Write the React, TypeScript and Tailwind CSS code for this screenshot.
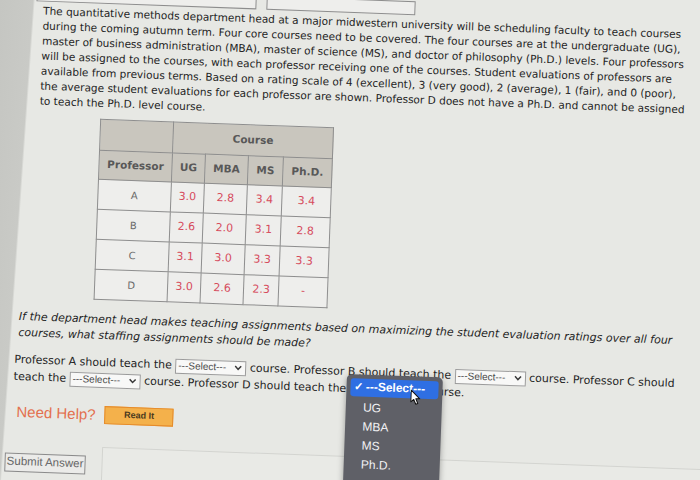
import React from "react";

function Select({ open = false }: { open?: boolean }) {
  return (
    <span className="relative inline-flex align-middle">
      <span className="inline-flex items-center justify-between w-[71px] h-[15px] border border-[#9b9b9b] bg-[#f8f8f7] pl-[2px] pr-[3px] font-['Liberation_Sans',Arial,sans-serif] text-[10px] leading-none text-[#4a4a4a]">
        <span>---Select---</span>
        <svg width="8" height="6" viewBox="0 0 8 6" className="ml-[2px]">
          <path d="M1 1.2 L4 4.4 L7 1.2" fill="none" stroke="#3a3a3a" strokeWidth="1.5" />
        </svg>
      </span>
      {open && (
        <span className="absolute left-[-3px] top-[-8px] z-10 w-[96px] h-[122px] rounded-[5px] bg-[#5f6067] shadow-[0_2px_6px_rgba(0,0,0,0.35)] p-[4px] font-['Liberation_Sans',Arial,sans-serif] text-[12px] text-[#f2f2f4]">
          <span className="flex items-center h-[18px] rounded-[3px] bg-[#2f6fe3] pl-[3px] font-bold text-white">
            <span className="w-[12px] text-[11px]">✓</span>
            <span>---Select---</span>
          </span>
          <span className="flex flex-col pl-[13px] pt-[2px] leading-[19px]">
            <span>UG</span>
            <span>MBA</span>
            <span>MS</span>
            <span>Ph.D.</span>
          </span>
          <svg width="11" height="16" viewBox="0 0 11 16" className="absolute left-[64px] top-[13px]">
            <path d="M0.8 0.8 L0.8 12.5 L3.6 10 L5.8 14.8 L7.8 13.9 L5.7 9.2 L9.6 9.2 Z" fill="#ffffff" stroke="#111" strokeWidth="1" strokeLinejoin="round" />
          </svg>
        </span>
      )}
    </span>
  );
}

const paragraph = [
  "The quantitative methods department head at a major midwestern university will be scheduling faculty to teach courses",
  "during the coming autumn term. Four core courses need to be covered. The four courses are at the undergraduate (UG),",
  "master of business administration (MBA), master of science (MS), and doctor of philosophy (Ph.D.) levels. Four professors",
  "will be assigned to the courses, with each professor receiving one of the courses. Student evaluations of professors are",
  "available from previous terms. Based on a rating scale of 4 (excellent), 3 (very good), 2 (average), 1 (fair), and 0 (poor),",
  "the average student evaluations for each professor are shown. Professor D does not have a Ph.D. and cannot be assigned",
  "to teach the Ph.D. level course.",
];

const rows: [string, string, string, string, string][] = [
  ["A", "3.0", "2.8", "3.4", "3.4"],
  ["B", "2.6", "2.0", "3.1", "2.8"],
  ["C", "3.1", "3.0", "3.3", "3.3"],
  ["D", "3.0", "2.6", "2.3", "-"],
];

export default function App() {
  const th = "border border-[#8e8e8e] font-bold text-[10.5px] text-[#585858]";
  const td = "border border-[#8e8e8e] text-[11px] text-[#d64b5c] bg-[#eeeeec]";
  return (
    <div className="pt-px w-[700px] h-[480px] overflow-hidden bg-[#e7e8e4] bg-[linear-gradient(94deg,#c5c6c2_0,#c9cac6_33px,#e7e8e4_35px,#e7e8e4_100%)] font-['DejaVu_Sans',Verdana,sans-serif]">
      <div className="origin-top-left rotate-[2.1deg] -mt-[15px] w-[780px]">
        <div className="flex h-[14px] gap-[10px] pl-[37px]">
          <div className="w-[220px] h-full border border-[#8d8d8d] bg-[#eeeeec]" />
          <div className="w-[149px] h-full border border-[#8d8d8d] bg-[#eeeeec]" />
        </div>

        <div className="mt-[2px] pl-[44px] text-[10.55px] leading-[15px] text-[#232323] whitespace-nowrap">
          {paragraph.map((l, i) => (
            <div key={i}>{l}</div>
          ))}
        </div>

        <table className="ml-[105px] mt-[8px] border-collapse text-center">
          <tbody>
            <tr className="h-[31px] bg-[#c9c6be]">
              <td className={`${th} w-[73px]`}></td>
              <td className={th} colSpan={4}>Course</td>
            </tr>
            <tr className="h-[29px] bg-[#c9c6be]">
              <td className={th}>Professor</td>
              <td className={`${th} w-[33px]`}>UG</td>
              <td className={`${th} w-[43px]`}>MBA</td>
              <td className={`${th} w-[35px]`}>MS</td>
              <td className={`${th} w-[49px]`}>Ph.D.</td>
            </tr>
            {rows.map((r) => (
              <tr key={r[0]} className="h-[30px]">
                <td className="border border-[#8e8e8e] bg-[#eeeeec] text-[10px] text-[#6a6a6a]">{r[0]}</td>
                <td className={td}>{r[1]}</td>
                <td className={td}>{r[2]}</td>
                <td className={td}>{r[3]}</td>
                <td className={td}>{r[4]}</td>
              </tr>
            ))}
          </tbody>
        </table>

        <div className="mt-[11.5px] pl-[31px] italic text-[11px] leading-[16px] text-[#232323] whitespace-nowrap">
          <div>If the department head makes teaching assignments based on maximizing the student evaluation ratings over all four</div>
          <div>courses, what staffing assignments should be made?</div>
        </div>

        <div className="mt-[10.5px] pl-[28px] text-[11px] leading-[17px] text-[#232323] whitespace-nowrap">
          <div>
            Professor A should teach the <Select /> course. Professor B should teach the <Select /> course. Professor C should
          </div>
          <div>
            teach the <Select /> course. Professor D should teach the <Select open /> course.
          </div>
        </div>

        <div className="mt-[17px] pl-[32px] flex items-center h-[20px]">
          <span className="font-['Liberation_Sans',Arial,sans-serif] text-[15px] text-[#e3704f]">Need Help?</span>
          <span className="ml-[9px] flex items-center justify-center w-[69px] h-[18px] border-[1.5px] border-[#e58b2c] bg-[#f4b14b] font-['Liberation_Sans',Arial,sans-serif] font-bold text-[9px] text-[#4b3a1e]">
            Read It
          </span>
        </div>

        <div className="mt-[22px] pl-[22px] flex items-start">
          <span className="mt-[8.5px] flex items-center justify-center w-[81px] h-[19px] border border-[#8a8a8a] bg-[#ebebe9] font-['Liberation_Sans',Arial,sans-serif] text-[11.5px] text-[#666]">
            Submit Answer
          </span>
          <div className="ml-[16px] flex-1 h-[70px] border border-[#d3d4d0] bg-[#e9eae6]" />
        </div>
      </div>
    </div>
  );
}
